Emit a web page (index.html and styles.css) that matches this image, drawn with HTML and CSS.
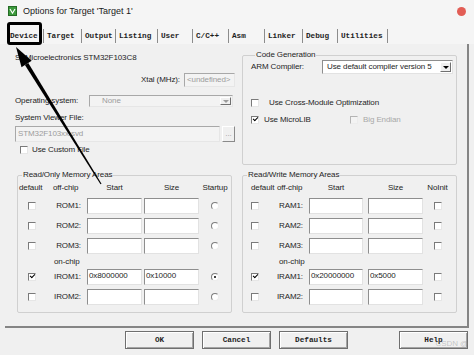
FILE: index.html
```html
<!DOCTYPE html>
<html>
<head>
	<meta charset="utf-8">
	<title>Options for Target 'Target 1'</title>
	<link rel="stylesheet" href="styles.css">
</head>
<body>
<div class="window">

	<div class="titlebar">
		<svg class="app-icon" width="9" height="10" viewBox="0 0 9 10">
			<rect x="0.5" y="0.5" width="8" height="9" fill="#3c9a3c" stroke="#256b25"/>
			<path d="M2 3 L4.5 7.2 L7 3" fill="none" stroke="#fff" stroke-width="1.2"/>
		</svg>
		<span class="title">Options for Target 'Target 1'</span>
		<span class="close"></span>
	</div>

	<div class="tabs">
		<div class="tab">Device</div>
		<div class="tab">Target</div>
		<div class="tab">Output</div>
		<div class="tab">Listing</div>
		<div class="tab">User</div>
		<div class="tab">C/C++</div>
		<div class="tab">Asm</div>
		<div class="tab">Linker</div>
		<div class="tab">Debug</div>
		<div class="tab">Utilities</div>
	</div>

	<div class="panel">
		<div class="top">
			<div class="device-col">
				<div class="device-name">STMicroelectronics STM32F103C8</div>
				<div class="xtal-row">
					<span class="xtal-label">Xtal (MHz):</span>
					<div class="field disabled xtal">&lt;undefined&gt;</div>
				</div>
				<div class="os-row">
					<span>Operating system:</span>
					<div class="combo disabled os"><span class="combo-text">None</span><span class="drop"></span></div>
				</div>
				<div class="svd-label">System Viewer File:</div>
				<div class="svd-row">
					<div class="field disabled svd">STM32F103xx.svd</div>
					<div class="browse">...</div>
				</div>
				<div class="check-row custom"><span class="cb"></span>Use Custom File</div>
			</div>

			<fieldset class="group codegen">
				<legend>Code Generation</legend>
				<div class="compiler-row">
					<span>ARM Compiler:</span>
					<div class="combo compiler"><span class="combo-text">Use default compiler version 5</span><span class="drop"></span></div>
				</div>
				<div class="check-row cross"><span class="cb"></span>Use Cross-Module Optimization</div>
				<div class="check-row microlib">
					<span class="check-item lib"><span class="cb on"></span>Use MicroLIB</span>
					<span class="check-item off"><span class="cb disabled"></span>Big Endian</span>
				</div>
			</fieldset>
		</div>

		<div class="bottom">
			<fieldset class="group mem rom">
				<legend>Read/Only Memory Areas</legend>
				<div class="mem-grid">
					<span class="hd hd-default">default</span>
					<span class="hd hd-chip">off-chip</span>
					<span class="hd hd-start">Start</span>
					<span class="hd hd-size">Size</span>
					<span class="hd hd-last">Startup</span>

					<span class="cb"></span><span class="name">ROM1:</span><span class="box start"></span><span class="box size"></span><span class="radio"></span>
					<span class="cb"></span><span class="name">ROM2:</span><span class="box start"></span><span class="box size"></span><span class="radio"></span>
					<span class="cb"></span><span class="name">ROM3:</span><span class="box start"></span><span class="box size"></span><span class="radio"></span>

					<span></span><span class="onchip">on-chip</span>

					<span class="cb on"></span><span class="name">IROM1:</span><span class="box start">0x8000000</span><span class="box size">0x10000</span><span class="radio on"></span>
					<span class="cb"></span><span class="name">IROM2:</span><span class="box start"></span><span class="box size"></span><span class="radio"></span>
				</div>
			</fieldset>

			<fieldset class="group mem ram">
				<legend>Read/Write Memory Areas</legend>
				<div class="mem-grid">
					<span class="hd hd-default">default</span>
					<span class="hd hd-chip">off-chip</span>
					<span class="hd hd-start">Start</span>
					<span class="hd hd-size">Size</span>
					<span class="hd hd-last">NoInit</span>

					<span class="cb"></span><span class="name">RAM1:</span><span class="box start"></span><span class="box size"></span><span class="cb last"></span>
					<span class="cb"></span><span class="name">RAM2:</span><span class="box start"></span><span class="box size"></span><span class="cb last"></span>
					<span class="cb"></span><span class="name">RAM3:</span><span class="box start"></span><span class="box size"></span><span class="cb last"></span>

					<span></span><span class="onchip">on-chip</span>

					<span class="cb on"></span><span class="name">IRAM1:</span><span class="box start">0x20000000</span><span class="box size">0x5000</span><span class="cb last"></span>
					<span class="cb"></span><span class="name">IRAM2:</span><span class="box start"></span><span class="box size"></span><span class="cb last"></span>
				</div>
			</fieldset>
		</div>
	</div>

	<div class="buttons">
		<div class="btn">OK</div>
		<div class="btn">Cancel</div>
		<div class="btn">Defaults</div>
		<div class="btn help">Help</div>
	</div>

	<div class="callout"></div>
	<svg class="arrow" width="474" height="355" viewBox="0 0 474 355">
		<polygon points="16,47 31.7,60.8 21.5,67.2" fill="#000"/>
		<polygon points="28.3,62.9 101.5,183.7 100.5,184.3 24.9,65.1" fill="#000"/>
	</svg>
	<div class="watermark">CSDN @</div>

</div>
</body>
</html>
```

FILE: styles.css
```css
* {
	box-sizing: border-box;
}
body {
	margin: 0;
	background: #f0f0f0;
	color: #1e1e1e;
	font-family: "Liberation Sans", Arial, sans-serif;
	font-size: 8px;
	line-height: 10px;
	letter-spacing: -0.1px;
}
.window {
	position: relative;
	width: 474px;
	height: 355px;
	overflow: hidden;
}

/* title bar */
.titlebar {
	display: flex;
	align-items: center;
	height: 22px;
	padding-left: 8px;
	background: #f5f5f5;
}
.app-icon {
	flex: none;
}
.title {
	margin-left: 6px;
	font-size: 9px;
	letter-spacing: 0;
	color: #1a1a1a;
}
.close {
	margin-left: auto;
	margin-right: 8px;
	width: 9px;
	height: 9px;
	border-radius: 50%;
	background: #e25d55;
}

/* tabs */
.tabs {
	display: grid;
	grid-template-columns: 37px 38px 34px 42px 35px 36px 36px 38px 35px 50px;
	height: 22px;
	padding: 7px 0 0 7px;
	background: #f5f5f5;
	font-family: "Liberation Mono", monospace;
	font-weight: bold;
	font-size: 7.7px;
	letter-spacing: 0;
}
.tab {
	height: 14px;
	line-height: 14px;
	padding-left: 3px;
	border-right: 1px solid #8c8c8c;
	white-space: nowrap;
}

/* panel */
.panel {
	height: 284px;
	margin: 0 5px;
	padding: 6px 10px 0 10px;
	border-right: 2px solid #858585;
	border-bottom: 2px solid #858585;
}
.top,
.bottom {
	display: grid;
	grid-template-columns: 220px 215px;
	column-gap: 7px;
}
.top {
	height: 115px;
}
.bottom {
	margin-top: 5px;
}

/* device column */
.device-name {
	margin-top: 3px;
}
.xtal-row {
	display: flex;
	align-items: center;
	justify-content: flex-end;
	height: 14px;
	margin-top: 10px;
}
.xtal-label {
	margin-right: 4px;
}
.os-row {
	display: flex;
	align-items: center;
	height: 12px;
	margin-top: 8px;
}
.svd-label {
	margin-top: 6px;
}
.svd-row {
	display: flex;
	gap: 2px;
	height: 16px;
	margin-top: 3px;
}

/* inputs */
.field,
.box,
.combo {
	background: #fff;
	border: 1px solid;
	border-color: #8e8e8e #e2e2e2 #e2e2e2 #8e8e8e;
	white-space: nowrap;
	overflow: hidden;
}
.field.disabled,
.combo.disabled {
	background: #f3f3f3;
	color: #9c9c9c;
	border-color: #a8a8a8 #e6e6e6 #e6e6e6 #a8a8a8;
}
.xtal {
	width: 51px;
	height: 14px;
	padding-left: 2px;
	line-height: 12px;
}
.svd {
	flex: 1;
	padding-left: 2px;
	line-height: 14px;
}
.browse {
	width: 13px;
	background: #f0f0f0;
	border: 1px solid;
	border-color: #fff #8a8a8a #8a8a8a #fff;
	color: #9c9c9c;
	text-align: center;
	line-height: 14px;
}
.combo {
	display: flex;
	align-items: center;
}
.combo-text {
	flex: 1;
}
.os {
	width: 144px;
	height: 12px;
	margin-left: auto;
	margin-right: 2px;
	padding-left: 12px;
}
.compiler {
	width: 131px;
	height: 14px;
	padding-left: 4px;
}
.drop {
	display: flex;
	align-items: center;
	justify-content: center;
	width: 11px;
	height: 10px;
	margin-right: 1px;
	background: #f0f0f0;
	border: 1px solid;
	border-color: #fff #707070 #707070 #fff;
}
.os .drop {
	height: 8px;
}
.drop::after {
	content: "";
	border-left: 3px solid transparent;
	border-right: 3px solid transparent;
	border-top: 3px solid #000;
}
.disabled .drop::after {
	border-top-color: #9c9c9c;
}

/* checkboxes and radios */
.check-row {
	display: flex;
	align-items: center;
	height: 10px;
}
.check-item {
	display: flex;
	align-items: center;
}
.cb {
	position: relative;
	flex: none;
	width: 8px;
	height: 8px;
	background: #fff;
	border: 1px solid;
	border-color: #7a7a7a #e6e6e6 #e6e6e6 #7a7a7a;
}
.cb.on::after {
	content: "";
	position: absolute;
	left: 1px;
	top: 0;
	width: 4px;
	height: 2px;
	border-left: 1.5px solid #000;
	border-bottom: 1.5px solid #000;
	transform: rotate(-45deg);
}
.cb.disabled {
	background: #f3f3f3;
	border-color: #b4b4b4 #ececec #ececec #b4b4b4;
}
.radio {
	position: relative;
	width: 8px;
	height: 8px;
	border-radius: 50%;
	background: #fff;
	border: 1px solid;
	border-color: #7d7d7d #ececec #ececec #7d7d7d;
}
.radio.on::after {
	content: "";
	position: absolute;
	left: 2px;
	top: 2px;
	width: 2px;
	height: 2px;
	border-radius: 50%;
	background: #000;
}
.custom {
	gap: 4px;
	margin-top: 3px;
	padding-left: 5px;
}

/* group boxes */
.group {
	margin: 0;
	padding: 0;
	min-width: 0;
	border: 1px solid #d0d0d0;
	border-radius: 2px;
}
.group legend {
	margin-left: 4px;
	padding: 0 1px;
	line-height: 10px;
}
.codegen {
	height: 115px;
	padding: 0 3px 0 8px;
}
.compiler-row {
	display: flex;
	align-items: center;
	justify-content: space-between;
	height: 14px;
}
.codegen .check-row {
	gap: 5px;
}
.codegen .cb {
	margin-right: 5px;
}
.cross {
	margin-top: 24px;
}
.microlib {
	margin-top: 7px;
}
.check-item.lib {
	width: 94px;
}
.check-item.off {
	color: #a8a8a8;
	margin-left: 0;
}
.microlib {
	gap: 0;
}

/* memory areas */
.mem {
	height: 143px;
	padding-top: 3px;
}
.rom {
	margin: 0 3px 0 2px;
}
.mem-grid {
	display: grid;
	grid-template-rows: 13px 20px 20px 20px 11px 20px 20px;
	align-items: center;
	white-space: nowrap;
}
.rom .mem-grid {
	grid-template-columns: 32px 37px 57px 55px 32px;
}
.ram .mem-grid {
	grid-template-columns: 32px 34px 57px 59px 31px;
}
.hd {
	align-self: start;
}
.hd-start,
.hd-size,
.hd-last {
	text-align: center;
}
.rom .hd-default {
	padding-left: 1px;
}
.rom .hd-chip {
	padding-left: 3px;
}
.rom .hd-start {
	width: 55px;
}
.ram .hd-default {
	padding-left: 8px;
}
.ram .hd-chip {
	padding-left: 2px;
}
.ram .hd-start {
	width: 54px;
}
.ram .hd-size {
	margin-left: 2px;
	width: 55px;
}
.ram .hd-last {
	padding-right: 6px;
}
.mem-grid .cb {
	justify-self: start;
}
.rom .mem-grid .cb {
	margin-left: 10px;
}
.ram .mem-grid .cb {
	margin-left: 8px;
}
.ram .mem-grid .cb.last {
	margin-left: 9px;
}
.name {
	text-align: right;
	padding-right: 6px;
}
.onchip {
	grid-column: 2 / -1;
	padding-left: 4px;
}
.box {
	height: 16px;
	padding-left: 1px;
	line-height: 12px;
}
.rom .box.start {
	width: 55px;
}
.ram .box.start {
	width: 54px;
}
.ram .box.size {
	width: 55px;
	margin-left: 2px;
}
.mem-grid .radio {
	justify-self: center;
}

/* buttons */
.buttons {
	display: flex;
	gap: 8px;
	padding: 3px 6px 0 125px;
}
.btn {
	width: 69px;
	height: 18px;
	background: #f0f0f0;
	border: 1px solid #6f6f6f;
	box-shadow: inset 1px 1px #fff, inset -1px -1px #a4a4a4;
	font-family: "Liberation Mono", monospace;
	font-weight: bold;
	font-size: 7.7px;
	letter-spacing: 0;
	line-height: 16px;
	text-align: center;
}
.btn.help {
	margin-left: auto;
}

/* annotations */
.callout {
	position: absolute;
	left: 7px;
	top: 22px;
	width: 35px;
	height: 23px;
	border: 3px solid #000;
	border-radius: 3px;
}
.arrow {
	position: absolute;
	left: 0;
	top: 0;
	pointer-events: none;
}
.watermark {
	position: absolute;
	right: 6px;
	bottom: 6px;
	color: rgba(140, 140, 140, 0.45);
	font-size: 8px;
}
```
